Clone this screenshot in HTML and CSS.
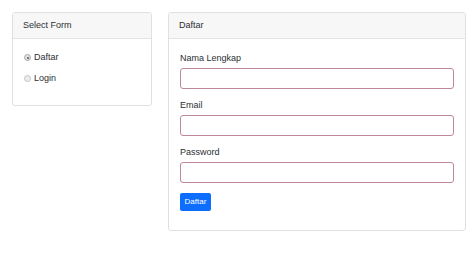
FILE: index.html
```html
<!DOCTYPE html>
<html lang="id">
<head>
<meta charset="utf-8">
<title>Form</title>
<link rel="stylesheet" href="styles.css">
</head>
<body>
<div class="page">
  <div class="card card-side">
    <div class="card-header">Select Form</div>
    <div class="card-body side-body">
      <label class="radio-row"><span class="radio checked"></span><span>Daftar</span></label>
      <label class="radio-row"><span class="radio"></span><span>Login</span></label>
    </div>
  </div>
  <div class="card card-main">
    <div class="card-header">Daftar</div>
    <div class="card-body main-body">
      <div class="group">
        <div class="label">Nama Lengkap</div>
        <div class="input"></div>
      </div>
      <div class="group">
        <div class="label">Email</div>
        <div class="input"></div>
      </div>
      <div class="group">
        <div class="label">Password</div>
        <div class="input"></div>
      </div>
      <div class="actions"><span class="btn">Daftar</span></div>
    </div>
  </div>
</div>
</body>
</html>
```
FILE: styles.css
```css
* { box-sizing: border-box; }
html, body { margin: 0; padding: 0; background: #fff; }
body {
  font-family: "Liberation Sans", Arial, sans-serif;
  font-size: 9px;
  line-height: 13px;
  color: #2b2f33;
}
.page {
  display: flex;
  align-items: flex-start;
  gap: 16px;
  padding: 12px 8px 0 12px;
}
.card {
  border: 1px solid #e0e0e0;
  border-radius: 3px;
  background: #fff;
  overflow: hidden;
}
.card-side { width: 140px; }
.card-main { width: 298px; }
.card-header {
  height: 26px;
  padding: 6px 10px;
  background: #f7f7f7;
  border-bottom: 1px solid #e3e3e3;
  line-height: 13px;
}
.side-body {
  padding: 12px 11px 20px 11px;
  display: flex;
  flex-direction: column;
  gap: 8px;
}
.radio-row {
  display: flex;
  align-items: center;
  gap: 3px;
  height: 13px;
}
.radio {
  width: 7px;
  height: 7px;
  border-radius: 50%;
  border: 1px solid #c4c4c4;
  background: #ececec;
  position: relative;
}
.radio.checked { background: #e2e2e2; border-color: #a8a8a8; }
.radio.checked::after {
  content: "";
  position: absolute;
  left: 1.5px; top: 1.5px;
  width: 2px; height: 2px;
  border-radius: 50%;
  background: #555;
}
.main-body {
  padding: 13px 11px 19px 11px;
}
.group { margin-bottom: 10px; }
.label { height: 13px; margin-bottom: 3px; }
.input {
  height: 21px;
  border: 1px solid #bf8898;
  border-radius: 3px;
  background: #fff;
}
.btn {
  display: inline-block;
  width: 31px;
  height: 18px;
  line-height: 18px;
  text-align: center;
  background: #0d6efd;
  color: #fff;
  font-size: 8px;
  border-radius: 2px;
}
```
